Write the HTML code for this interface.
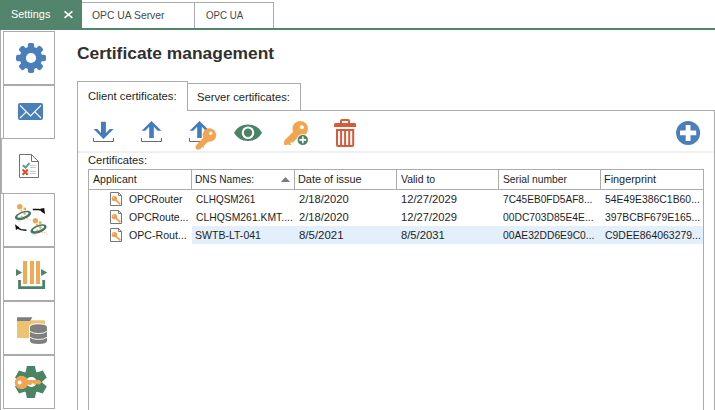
<!DOCTYPE html>
<html>
<head>
<meta charset="utf-8">
<title>Certificate management</title>
<style>
*{box-sizing:border-box;margin:0;padding:0}
html,body{width:715px;height:410px;overflow:hidden;background:#fff}
body{font-family:"Liberation Sans",sans-serif;font-size:11px;color:#1e1e1e;position:relative}
.abs{position:absolute}
.t{position:absolute;white-space:nowrap;line-height:14px;font-size:11px;transform-origin:0 0;color:#1e1e1e}
#tab1{left:0;top:0;width:82px;height:30px;background:#53856c}
#gline{left:0;top:28px;width:715px;height:2px;background:#53856c}
.toptab{background:#fff;border:1px solid #ababab;border-bottom:none;top:2px;height:26px}
.sb{left:3px;width:52px;height:54px;border:1px solid #ababab;background:#fff}
.itab{background:#fff;border:1px solid #ababab;border-bottom:none}
#panel{left:77px;top:110px;width:638px;height:310px;border:1px solid #ababab}
#tbl{left:88px;top:169px;width:616px;height:250px;border:1px solid #ababab}
.hd{position:absolute;top:0;height:20px;border-right:1px solid #ababab;border-bottom:1px solid #ababab}
</style>
</head>
<body>
<!-- top document tabs -->
<div class="abs" id="gline"></div>
<div class="abs toptab" style="left:81px;width:114px"></div>
<div class="abs toptab" style="left:194px;width:80px"></div>
<div class="abs" id="tab1"></div>

<!-- sidebar -->
<div class="abs" style="left:0;top:30px;width:1px;height:380px;background:#ababab"></div>
<div class="abs" style="left:1px;top:138px;width:1px;height:56px;background:#ababab"></div>
<div class="abs" style="left:1px;top:138px;width:3px;height:1px;background:#ababab"></div>
<div class="abs" style="left:1px;top:193px;width:3px;height:1px;background:#ababab"></div>
<div class="abs sb" style="top:31px"></div>
<div class="abs sb" style="top:85px"></div>
<div class="abs sb" style="top:193px"></div>
<div class="abs sb" style="top:247px"></div>
<div class="abs sb" style="top:301px"></div>
<div class="abs sb" style="top:355px"></div>

<!-- inner tab control -->
<div class="abs" id="panel"></div>
<div class="abs itab" style="left:187px;top:83px;width:114px;height:27px"></div>
<div class="abs itab" style="left:77px;top:81px;width:111px;height:30px"></div>

<!-- toolbar separator -->
<div class="abs" style="left:78px;top:151px;width:636px;height:2px;background:#efefef"></div>

<!-- table -->
<div class="abs" id="tbl">
  <div class="hd" style="left:0;width:103px"></div>
  <div class="hd" style="left:103px;width:103px"></div>
  <div class="hd" style="left:206px;width:102px"></div>
  <div class="hd" style="left:308px;width:102px"></div>
  <div class="hd" style="left:410px;width:102px"></div>
  <div class="hd" style="left:512px;width:102px;border-right:none"></div>
</div>
<div class="abs" style="left:192px;top:226px;width:511px;height:18px;background:#e3effa"></div>

<div class="t" style="left:11.00px;top:7px;transform:scaleX(0.9892);color:#fff">Settings</div>
<div class="t" style="left:92.00px;top:8px;transform:scaleX(0.9412);color:#484848">OPC UA Server</div>
<div class="t" style="left:206.00px;top:8px;transform:scaleX(0.8824);color:#484848">OPC UA</div>
<div class="t" style="left:77.00px;top:43px;transform:scaleX(1.0226);font-size:17px;font-weight:bold;line-height:22px;color:#303030">Certificate management</div>
<div class="t" style="left:197.00px;top:90px;transform:scaleX(1.0199);">Server certificates:</div>
<div class="t" style="left:88.00px;top:89px;transform:scaleX(1.0204);">Client certificates:</div>
<div class="t" style="left:88.00px;top:153px;transform:scaleX(1.0165);">Certificates:</div>
<div class="t" style="left:93.00px;top:172px;transform:scaleX(0.9653);">Applicant</div>
<div class="t" style="left:195.00px;top:172px;transform:scaleX(0.9221);">DNS Names:</div>
<div class="t" style="left:298.00px;top:172px;transform:scaleX(0.9912);">Date of issue</div>
<div class="t" style="left:401.00px;top:172px;transform:scaleX(0.9513);">Valid to</div>
<div class="t" style="left:503.00px;top:172px;transform:scaleX(0.9333);">Serial number</div>
<div class="t" style="left:604.00px;top:172px;transform:scaleX(0.9890);">Fingerprint</div>
<div class="t" style="left:129.00px;top:192px;transform:scaleX(0.9380);">OPCRouter</div>
<div class="t" style="left:196.00px;top:192px;transform:scaleX(0.9054);">CLHQSM261</div>
<div class="t" style="left:299.00px;top:192px;transform:scaleX(1.0138);">2/18/2020</div>
<div class="t" style="left:401.00px;top:192px;transform:scaleX(1.0173);">12/27/2029</div>
<div class="t" style="left:503.00px;top:192px;transform:scaleX(0.9196);">7C45EB0FD5AF8...</div>
<div class="t" style="left:605.00px;top:192px;transform:scaleX(0.9451);">54E49E386C1B60...</div>
<div class="t" style="left:129.00px;top:210px;transform:scaleX(0.9527);">OPCRoute...</div>
<div class="t" style="left:196.00px;top:210px;transform:scaleX(0.9423);">CLHQSM261.KMT....</div>
<div class="t" style="left:299.00px;top:210px;transform:scaleX(1.0138);">2/18/2020</div>
<div class="t" style="left:401.00px;top:210px;transform:scaleX(1.0173);">12/27/2029</div>
<div class="t" style="left:503.00px;top:210px;transform:scaleX(0.9369);">00DC703D85E4E...</div>
<div class="t" style="left:605.00px;top:210px;transform:scaleX(0.9433);">397BCBF679E165...</div>
<div class="t" style="left:129.00px;top:228px;transform:scaleX(0.9645);">OPC-Rout...</div>
<div class="t" style="left:195.00px;top:228px;transform:scaleX(0.9577);">SWTB-LT-041</div>
<div class="t" style="left:299.00px;top:228px;transform:scaleX(1.0409);">8/5/2021</div>
<div class="t" style="left:401.00px;top:228px;transform:scaleX(1.0196);">8/5/2031</div>
<div class="t" style="left:503.00px;top:228px;transform:scaleX(0.9337);">00AE32DD6E9C0...</div>
<div class="t" style="left:605.00px;top:228px;transform:scaleX(0.9492);">C9DEE864063279...</div>

<svg class="abs" style="left:0;top:0" width="715" height="410" viewBox="0 0 715 410">
<!-- close X on Settings tab -->
<path d="M64.5 11.4 L72.4 17.8 M72.4 11.4 L64.5 17.8" stroke="#fff" stroke-width="1.5" fill="none"/>
<!-- sort arrow -->
<path d="M281 182 L285.5 176.9 L290 182 Z" fill="#7a7a7a"/>

<!-- sidebar 1: blue gear -->
<g transform="translate(31 58)" fill="#4a7fba">
  <circle r="11.2"/>
  <g id="tooth"><rect x="-3.2" y="-15" width="6.4" height="9" rx="2"/></g>
  <use href="#tooth" transform="rotate(45)"/><use href="#tooth" transform="rotate(90)"/><use href="#tooth" transform="rotate(135)"/>
  <use href="#tooth" transform="rotate(180)"/><use href="#tooth" transform="rotate(225)"/><use href="#tooth" transform="rotate(270)"/><use href="#tooth" transform="rotate(315)"/>
  <circle r="5.1" fill="#fff"/>
</g>

<!-- sidebar 2: envelope -->
<rect x="18" y="103" width="25" height="17" rx="2" fill="#4a7fba"/>
<path d="M20 105.3 L30.5 116 L41 105.3 M20 118 L26.6 111.6 M41 118 L34.6 111.6" stroke="#fff" stroke-width="1.2" fill="none"/>

<!-- sidebar 3: document with check / cross -->
<path d="M19.5 154.5 H31.5 L38.5 161.5 V177.5 H19.5 Z" fill="#fff" stroke="#727272" stroke-width="1"/>
<path d="M31.5 154.5 V161.5 H38.5" fill="none" stroke="#727272" stroke-width="1"/>
<path d="M22.8 165.2 L25.6 167.6 L29.4 163.2" fill="none" stroke="#55a088" stroke-width="2"/>
<path d="M22.6 169.4 L27.8 174.8 M27.8 169.4 L22.6 174.8" fill="none" stroke="#d9532c" stroke-width="2.2"/>
<path d="M30 165.5 H36 M30 167.5 H36 M30 171.5 H36 M30 173.5 H36" stroke="#c4c4c4" stroke-width="0.9"/>

<!-- sidebar 4: rings / transfer -->
<g>
  <circle cx="19.8" cy="206.8" r="2.7" fill="#f2a550"/>
  <circle cx="24.8" cy="208.9" r="1.4" fill="#f2a550"/>
  <circle cx="21.4" cy="210.7" r="0.9" fill="#f2a550"/>
  <g transform="rotate(-20 23 215.4)"><ellipse cx="23" cy="215.4" rx="8.5" ry="4" fill="#3f7a5f"/><ellipse cx="23.2" cy="214.95" rx="6" ry="1.9" fill="#fff"/></g>
  <circle cx="24.6" cy="213.8" r="1.3" fill="#f2a550"/>
  <circle cx="21.7" cy="216.4" r="0.9" fill="#f2a550"/>
  <path d="M17.6 220.6 l1.2 .5 l.9 .9 M25.2 218.2 l1.6 .5 l1.3 .4 l1.4 .5 l1 .9" fill="none" stroke="#f6b877" stroke-width="1" stroke-dasharray="1.1 .7"/>
  <circle cx="35.35" cy="220.7" r="2.7" fill="#f2a550"/>
  <circle cx="40.2" cy="222.7" r="1.4" fill="#f2a550"/>
  <circle cx="37" cy="224.5" r="0.9" fill="#f2a550"/>
  <g transform="rotate(-20 38.5 229)"><ellipse cx="38.5" cy="229" rx="8.5" ry="4" fill="#3f7a5f"/><ellipse cx="38.7" cy="228.55" rx="6" ry="1.9" fill="#fff"/></g>
  <circle cx="40.2" cy="227.4" r="1.3" fill="#f2a550"/>
  <circle cx="37.2" cy="230.2" r="0.9" fill="#f2a550"/>
  <path d="M40.4 232.4 l1.8 .4 l1.6 .2 l1.4 -.6 l1.2 1 l.5 1.4 M33.2 234.3 l1.2 .5 l1.4 .7" fill="none" stroke="#f6b877" stroke-width="1" stroke-dasharray="1.1 .7"/>
  <path d="M32.8 209.5 H38.5 Q41.4 209.6 43 211.4" fill="none" stroke="#111" stroke-width="1.4"/>
  <path d="M40.2 208.8 L44.2 207.9 L45.1 213.9 L41.6 211.9 Z" fill="#111"/>
  <path d="M26.5 230.3 L21 229.6 Q18.6 229 17.2 227" fill="none" stroke="#111" stroke-width="1.4"/>
  <path d="M15 224.3 L16 230 L19.6 227.7 Z" fill="#111"/>
</g>

<!-- sidebar 5: queue -->
<rect x="23" y="261" width="4" height="23" fill="#f2a957"/>
<rect x="30" y="261" width="4" height="23" fill="#f2a957"/>
<rect x="36" y="261" width="4" height="23" fill="#f2a957"/>
<path d="M16 269 L22.2 272.5 L16 276 Z M41.1 269 L47.3 272.5 L41.1 276 Z" fill="#4a8465"/>
<path d="M18.1 280 H20.9 V286.3 H42.3 V280 H45.1 V289 H18.1 Z" fill="#4a8465"/>

<!-- sidebar 6: folder + database -->
<path d="M17.8 317.3 H32.4 L30.2 321 H17 V318.1 Q17 317.3 17.8 317.3 Z" fill="#7d7d7d"/>
<path d="M17 321 H30.2 L31.4 320.2 H44 Q45 320.2 45 321.2 V337 Q45 337.9 44 337.9 H18 Q17 337.9 17 337 Z" fill="#edc272"/>
<g>
  <path d="M29 327 Q29 323.2 38.5 323.2 Q48 323.2 48 327 V341.2 Q48 345 38.5 345 Q29 345 29 341.2 Z" fill="#fff"/>
  <path d="M30 327.2 Q30 324.2 38.5 324.2 Q47 324.2 47 327.2 V341 Q47 344 38.5 344 Q30 344 30 341 Z" fill="#7f7f7f"/>
  <path d="M30 331.4 Q33 333.6 38.5 333.6 Q44 333.6 47 331.4 M30 337.3 Q33 339.5 38.5 339.5 Q44 339.5 47 337.3" fill="none" stroke="#fff" stroke-width="0.9"/>
</g>

<!-- sidebar 7: green gear with key -->
<g transform="translate(30.9 382)">
  <g fill="#4a8465">
    <circle r="10.9"/>
    <g id="t6"><path d="M-4 -16 H4 L5.2 -10.4 L6.4 -8 H-6.4 L-5.2 -10.4 Z"/></g>
    <use href="#t6" transform="rotate(60)"/><use href="#t6" transform="rotate(120)"/><use href="#t6" transform="rotate(180)"/><use href="#t6" transform="rotate(240)"/><use href="#t6" transform="rotate(300)"/>
  </g>
  <ellipse cx="0.4" cy="0" rx="5.4" ry="5" fill="#fff"/>
  <circle cx="-9.4" cy="0.5" r="6.7" fill="#f2a550"/>
  <path d="M-4 -2 H8.6 L10.8 0.3 L8.6 2.5 H6.5 V1.6 H4.8 V2.8 H3 V1.6 H1 V2.8 H-4 Z" fill="#f2a550"/>
  <circle cx="-11.3" cy="0.5" r="2" fill="#fff"/>
</g>

<!-- toolbar 1: download -->
<path d="M93.6 129.1 H97.3 L101 133 V121.8 H105.9 V133 L109.8 129.1 H113.6 L103.5 139 Z" fill="#437cbd"/>
<path d="M93.5 138 V141.5 H113.5 V138" fill="none" stroke="#6a6a6a" stroke-width="1"/>
<!-- toolbar 2: upload -->
<path d="M151.5 121 L161.4 130.7 H157.7 L153.8 126.8 V138 H149.2 V126.8 L145.3 130.7 H141.7 Z" fill="#437cbd"/>
<path d="M141.5 138 V141.5 H161.5 V138" fill="none" stroke="#6a6a6a" stroke-width="1"/>
<!-- toolbar 3: upload + key -->
<path d="M199.5 121 L209.4 130.7 H205.7 L201.8 126.8 V138 H197.2 V126.8 L193.3 130.7 H189.7 Z" fill="#437cbd"/>
<path d="M189.5 138 V141.5 H203" fill="none" stroke="#6a6a6a" stroke-width="1"/>
<g>
  <circle cx="209.4" cy="135" r="6.8" fill="#f2a550"/>
  <path d="M204.6 136.2 L209.2 140.8 L200 149.2 Q198 150.2 196.2 149 Q194.9 147.4 195.9 145.4 Z" fill="#f2a550"/>
  <path d="M203.4 146 l.9 .9 l-.9 .9 l-.9 -.9 z" fill="#f2a550"/>
  <circle cx="210.7" cy="133.3" r="1.7" fill="#fff"/>
</g>
<!-- toolbar 4: eye -->
<path d="M234 132.8 A16.05 16.05 0 0 1 262 132.8 A16.05 16.05 0 0 1 234 132.8 Z" fill="#4a8465"/>
<circle cx="248" cy="132.8" r="5.25" fill="none" stroke="#fff" stroke-width="2.1"/>
<!-- toolbar 5: key + plus -->
<g>
  <circle cx="300.2" cy="128.7" r="7.8" fill="#f2a550"/>
  <path d="M293.4 131.6 L298.6 136.8 L292.6 142.8 L291.6 141.8 L290.2 143.2 L291.2 144.2 L290.5 144.9 H288.6 L288.2 143.8 L287.2 144.9 H284.2 V140.8 Z" fill="#f2a550"/>
  <circle cx="301.8" cy="127.2" r="2" fill="#fff"/>
  <circle cx="302.8" cy="139.9" r="5.9" fill="#fff"/>
  <circle cx="302.8" cy="139.9" r="5.2" fill="#4a8465"/>
  <path d="M299.4 139.9 H306.2 M302.8 136.5 V143.3" stroke="#fff" stroke-width="1.6"/>
</g>
<!-- toolbar 6: trash -->
<g fill="#d75a3a">
  <path d="M334 127 V124.6 Q334 123 335.6 123 H354.5 Q356.1 123 356.1 124.6 V127 Z"/>
  <path d="M340 123.5 V121 Q340 119 342 119 H348 Q350 119 350 121 V123.5 H348 V121 H342 V123.5 Z"/>
  <path d="M336 129 H354.2 V145 Q354.2 147 352.2 147 H338 Q336 147 336 145 Z M338 131 V145 H340.1 V131 Z M342.1 131 V145 H344.1 V131 Z M346.1 131 V145 H348.2 V131 Z M350.2 131 V145 H352.2 V131 Z" fill-rule="evenodd"/>
</g>
<!-- toolbar right: add -->
<circle cx="688.1" cy="132.9" r="12" fill="#4a7fba"/>
<path d="M680 130.6 H685.7 V124.9 H690.5 V130.6 H696.2 V135.2 H690.5 V141.1 H685.7 V135.2 H680 Z" fill="#fff"/>

<!-- row icons -->
<g id="cert">
  <path d="M110.5 192.5 H118.5 L121.5 195.5 V205.5 H110.5 Z" fill="#fff" stroke="#777" stroke-width="1"/>
  <path d="M118.5 192.5 V195.5 H121.5" fill="none" stroke="#777" stroke-width="1"/>
  <circle cx="114.4" cy="198.6" r="2.7" fill="#f0a04a"/>
  <path d="M115.6 199.8 L120.4 204.4" stroke="#f0a04a" stroke-width="1.7" fill="none"/>
  <circle cx="113.6" cy="197.8" r="0.7" fill="#fbe3c4"/>
</g>
<use href="#cert" y="18"/>
<use href="#cert" y="36"/>
</svg>

</body>
</html>
